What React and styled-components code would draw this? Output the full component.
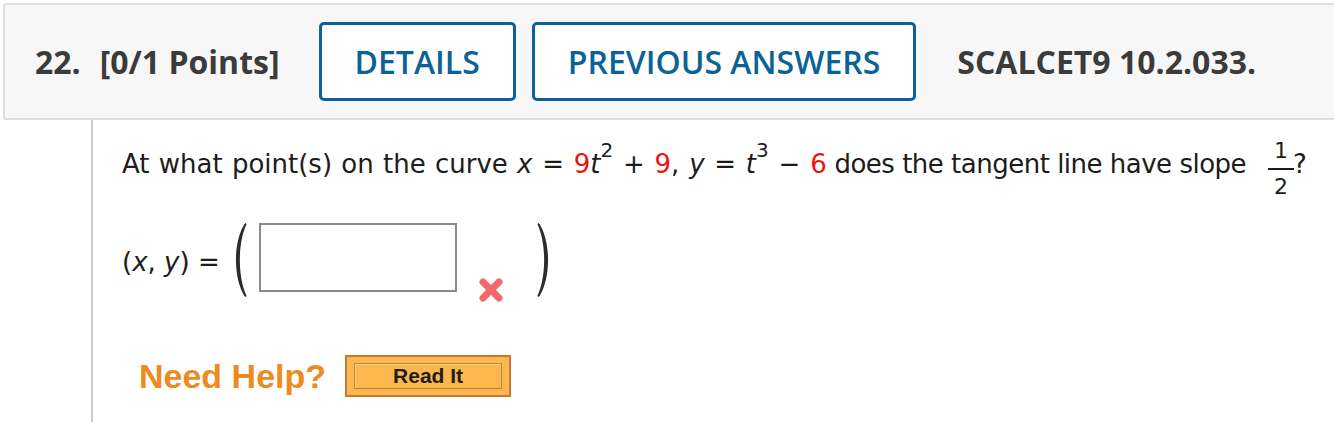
import React from 'react'
import styled, { createGlobalStyle } from 'styled-components'

// Page-wide reset
const GlobalStyle = createGlobalStyle`
    body {
        margin: 0;
        background: #ffffff;
        overflow: hidden;
    }
`;

// Tall stretchy parenthesis drawn like a math delimiter
function Paren({ right }) {
    return (
        <ParenSvg viewBox="0 0 20 80" $right={right}>
            <path
                d="M16 1 C3 20 3 60 16 79 L17.5 78 C8 58 8 22 17.5 2 Z"
                fill="#2b2b2b"
            />
        </ParenSvg>
    )
}

// Red "wrong answer" cross
function WrongMark() {
    return (
        <MarkSvg viewBox="0 0 28 28">
            <g stroke="#f0595c" strokeWidth="7" strokeLinecap="round" opacity="0.9">
                <line x1="6" y1="6" x2="22" y2="22" />
                <line x1="22" y1="6" x2="6" y2="22" />
            </g>
        </MarkSvg>
    )
}

function App() {
    return (
        <Page>
            <GlobalStyle />
            <Header>
                <QNum>22.</QNum>
                <Points>[0/1 Points]</Points>
                <HeaderButton $gap={39}>DETAILS</HeaderButton>
                <HeaderButton $gap={16}>PREVIOUS ANSWERS</HeaderButton>
                <Ref>SCALCET9 10.2.033.</Ref>
            </Header>

            <Body>
                <Question>
                    <Words $spacing={1}>At what point(s) on the curve </Words>
                    <Math>
                        <Var>x</Var> = <Red>9</Red><Var>t</Var><Sup>2</Sup> + <Red>9</Red>,{' '}
                        <Var>y</Var> = <Var>t</Var><Sup>3</Sup> − <Red>6</Red>
                    </Math>
                    <Words $spacing={-0.5}> does the tangent line have slope</Words>
                    <Frac>
                        <FracNum>1</FracNum>
                        <FracBar />
                        <FracNum>2</FracNum>
                    </Frac>
                    <Mark>?</Mark>
                </Question>

                <AnswerRow>
                    <Label>(<Var>x</Var>, <Var>y</Var>) =</Label>
                    <Paren />
                    <AnswerBox />
                    <WrongMark />
                    <Paren right />
                </AnswerRow>

                <HelpRow>
                    <NeedHelp>Need Help?</NeedHelp>
                    <ReadIt>
                        <ReadItInner>Read It</ReadItInner>
                    </ReadIt>
                </HelpRow>
            </Body>
        </Page>
    )
}

const Page = styled.div`
    padding: 3px 0 0 3px;
    width: 1400px;
    height: 422px;
    box-sizing: border-box;
`;

const Header = styled.div`
    display: flex;
    align-items: center;
    height: 117px;
    box-sizing: border-box;
    border: 2px solid #dddddd;
    border-radius: 3px;
    background: #f7f7f7;
    padding-left: 30px;
    font-family: "Open Sans", "Liberation Sans", sans-serif;
    color: #3b3b3b;
`;

const QNum = styled.span`
    font-size: 32px;
    font-weight: 700;
`;

const Points = styled.span`
    font-size: 32px;
    font-weight: 700;
    margin-left: 19px;
`;

const HeaderButton = styled.div`
    display: flex;
    align-items: center;
    justify-content: center;
    height: 79px;
    box-sizing: border-box;
    margin-left: ${p => p.$gap}px;
    padding: 0 33px;
    border: 3px solid #0b6296;
    border-radius: 5px;
    background: #ffffff;
    color: #0b6296;
    font-size: 32px;
    font-weight: 600;
`;

const Ref = styled.span`
    margin-left: 41px;
    font-size: 32px;
    font-weight: 700;
`;

const Body = styled.div`
    margin-left: 88px;
    border-left: 2px solid #cccccc;
    height: 302px;
    padding: 22px 0 0 29px;
    box-sizing: border-box;
    font-family: "DejaVu Sans", Verdana, sans-serif;
    color: #1c1c1c;
`;

const Question = styled.div`
    font-size: 26px;
    line-height: 30px;
    white-space: nowrap;
`;

const Words = styled.span`
    letter-spacing: ${p => (p.$spacing < 0 ? `${p.$spacing}px` : 'normal')};
    word-spacing: ${p => (p.$spacing > 0 ? `${p.$spacing}px` : 'normal')};
`;

const Math = styled.span`
    word-spacing: 1.5px;
`;

const Var = styled.i`
    font-style: italic;
`;

const Red = styled.span`
    color: #ea1512;
`;

const Sup = styled.sup`
    font-size: 20px;
    line-height: 0;
    vertical-align: 16px;
`;

const Frac = styled.span`
    display: inline-flex;
    flex-direction: column;
    align-items: center;
    vertical-align: 15px;
    margin-left: 22px;
`;

const FracNum = styled.span`
    font-size: 22px;
    line-height: 18px;
`;

const FracBar = styled.span`
    width: 26px;
    height: 2px;
    background: #1c1c1c;
    margin: 8px 0 8px;
`;

const Mark = styled.span`
    margin-left: -1px;
`;

const AnswerRow = styled.div`
    display: flex;
    align-items: center;
    margin-top: 25px;
    height: 78px;
`;

const Label = styled.span`
    font-size: 26px;
    margin-top: 4px;
    margin-right: 10px;
`;

const ParenSvg = styled.svg`
    width: 19px;
    height: 78px;
    transform: ${p => (p.$right ? 'scaleX(-1)' : 'none')};
    margin-left: ${p => (p.$right ? '30px' : '0')};
`;

const AnswerBox = styled.div`
    width: 198px;
    height: 69px;
    box-sizing: border-box;
    margin-left: 10px;
    margin-bottom: 5px;
    border: 2px solid #8a8a8a;
    background: #ffffff;
`;

const MarkSvg = styled.svg`
    width: 28px;
    height: 28px;
    align-self: flex-end;
    margin-left: 20px;
    margin-bottom: -5px;
`;

const HelpRow = styled.div`
    display: flex;
    align-items: center;
    margin-top: 56px;
    margin-left: 17px;
`;

const NeedHelp = styled.span`
    font-family: "Liberation Sans", Arial, sans-serif;
    font-weight: 700;
    font-size: 34px;
    color: #ef8a1f;
`;

const ReadIt = styled.div`
    margin-left: 19px;
    width: 166px;
    height: 42px;
    box-sizing: border-box;
    padding: 6px 7px;
    border: 2px solid #c37a31;
    background: #fdb74c;
`;

const ReadItInner = styled.div`
    height: 100%;
    box-sizing: border-box;
    display: flex;
    align-items: center;
    justify-content: center;
    border: 1px solid #b98447;
    box-shadow: inset 1px 1px 0 #ffd38c;
    font-family: "Liberation Sans", Arial, sans-serif;
    font-weight: 700;
    font-size: 21px;
    color: #1e1e1e;
`;

export default App
